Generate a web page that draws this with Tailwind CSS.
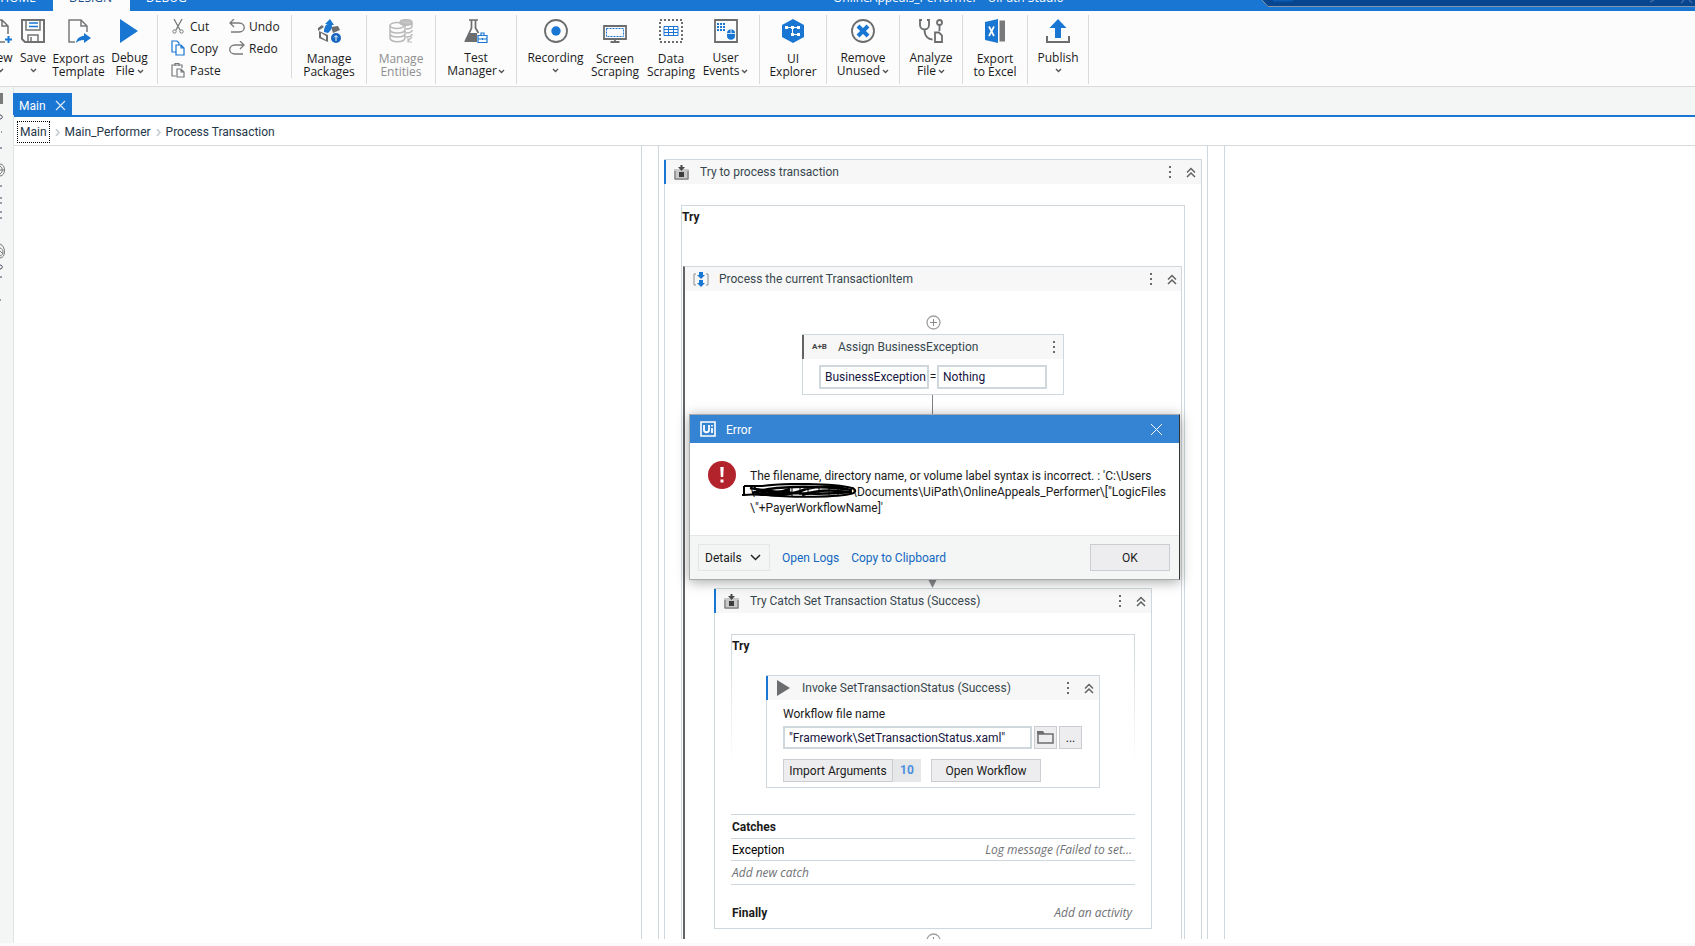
<!DOCTYPE html>
<html lang="en">
  <head>
    <meta charset="UTF-8" />
    <meta name="viewport" content="width=device-width, initial-scale=1.0" />
    <title>OnlineAppeals_Performer - UiPath Studio</title>
    <script src="https://cdn.jsdelivr.net/npm/@tailwindcss/browser@4"></script>
  </head>

  <body
    class="h-screen overflow-hidden flex flex-col bg-[#fafafa] font-['Open_Sans','Noto_Sans',sans-serif] text-[12px] leading-4 text-[#1b1b1b]"
  >
    <!-- shared icons -->
    <svg class="hidden">
      <symbol id="chev" viewBox="0 0 7 5">
        <path d="M1 1l2.5 2.5L6 1" fill="none" stroke="#555" stroke-width="1.4" />
      </symbol>
      <symbol id="dots" viewBox="0 0 4 14">
        <path d="M1 1h2v2H1zM1 6h2v2H1zM1 11h2v2H1z" fill="#6b6b6b" />
      </symbol>
      <symbol id="collapse" viewBox="0 0 10 11">
        <path d="M1 5.5l4-4 4 4M1 10l4-4 4 4" fill="none" stroke="#5f6163" stroke-width="1.5" />
      </symbol>
      <symbol id="trycatch" viewBox="0 0 15 15">
        <path d="M0 4h15v11H0z" fill="#c9c9c9" />
        <path d="M1 6v8h13V6" fill="none" stroke="#6b6b6b" />
        <path d="M5 7h5v5H5z" fill="#3d3d3d" />
        <path d="M6.5 0h2v2h2.5L7.5 6 4 2h2.500z" fill="#4a4a4a" />
      </symbol>
      <symbol id="plus" viewBox="0 0 15 15">
        <circle cx="7.5" cy="7.500" r="6.5" fill="#fff" stroke="#a0a0a0" stroke-width="1.300" />
        <path d="M7.500 4v7M4 7.500h7" stroke="#8a8a8a" />
      </symbol>
    </svg>

    <header class="relative h-[11px] shrink-0 overflow-hidden bg-[#1976d2] text-white">
      <nav class="flex h-[11px] items-end">
        <a href="#" class="w-[53px] h-[11px] relative"><span class="absolute right-[17px] bottom-[5px]">HOME</span></a>
        <a href="#" class="w-[77px] h-[11px] relative bg-[#fcfcfc] text-[#1b4f8a]"><span class="absolute left-4 bottom-[5px]">DESIGN</span></a>
        <a href="#" class="w-[77px] h-[11px] relative"><span class="absolute left-4 bottom-[5px]">DEBUG</span></a>
      </nav>
      <span class="absolute left-[833px] bottom-[5px] whitespace-nowrap">OnlineAppeals_Performer - UiPath Studio</span>
      <svg class="absolute right-0 top-0" width="434" height="8" viewBox="0 0 434 8">
        <path d="M1 0l6 7h427V0z" fill="#07458f" />
        <path d="M1 0l6 6.500h427" fill="none" stroke="#8795a8" />
        <path d="M12 0h20v1.500H12z" fill="#0b5cb0" />
        <path d="M389 2l4-2M420 3l3-3M428 0l3 3" stroke="#3d6aa5" stroke-width="1.500" />
      </svg>
    </header>

    <!-- ribbon -->
    <div class="flex h-[76px] shrink-0 border-b border-[#dadcdc] bg-[#fcfcfc] pt-1 leading-[13px] text-center whitespace-nowrap overflow-hidden">
      <div class="flex h-[69px] gap-[9px] pr-[10px] border-r border-[#d9dadb] -ml-3">
        <button class="flex flex-col items-center w-6 pt-1">
          <svg width="24" height="24" viewBox="0 0 24 24" fill="none" stroke="#6f7173" stroke-width="1.500">
            <path d="M17 23H3V1h11l6 6v8M14 1v6h6" />
            <path d="M20.500 17v7M17 20.500h7" stroke="#1976d2" stroke-width="2" />
          </svg>
          <span class="mt-2">New</span>
          <svg class="mt-1" width="7" height="5"><use href="#chev" /></svg>
        </button>
        <button class="flex flex-col items-center w-6 pt-1">
          <svg width="24" height="24" viewBox="0 0 24 24" fill="none" stroke="#6f7173" stroke-width="2">
            <path d="M1 1h22v22H4l-3-3z" />
            <path d="M5 1v10h14V1M7 23v-7h10v7M10 18v4" stroke-width="1.500" />
            <path d="M8 4h9M8 7.500h9" stroke="#1976d2" stroke-width="1.500" />
          </svg>
          <span class="mt-2">Save</span>
          <svg class="mt-1" width="7" height="5"><use href="#chev" /></svg>
        </button>
        <button class="flex flex-col items-center w-[49px] pt-1">
          <svg width="24" height="24" viewBox="0 0 24 24" fill="none">
            <path d="M8 23H2V1h12l6 6v6M14 1v6h6" stroke="#77797b" stroke-width="1.500" />
            <path d="M9 24c1-5 4-7 8-7v-3l7 5-7 5v-3c-4 0-6 1-8 3z" fill="#1976d2" />
          </svg>
          <span class="mt-[9px]">Export as<br />Template</span>
        </button>
        <button class="flex flex-col items-center w-[35px] pt-1">
          <svg width="24" height="24" viewBox="0 0 24 24"><path d="M2 0l18 12L2 24z" fill="#1976d2" /></svg>
          <span class="mt-2">Debug<br />File<svg class="inline ml-[2px]" width="7" height="5"><use href="#chev" /></svg></span>
        </button>
      </div>

      <div class="grid grid-cols-[58px_auto] auto-rows-[22px] h-[63px] w-[134px] pl-[13px] border-r border-[#d9dadb] text-left content-start">
        <button class="flex items-center gap-[5px]">
          <svg width="14" height="15" viewBox="0 0 14 15" fill="none" stroke="#77797b">
            <path d="M3 0l6 11M11 0L5 11" stroke-width="1.300" /><circle cx="3.500" cy="12.500" r="1.700" /><circle cx="10.500" cy="12.500" r="1.700" />
          </svg>
          Cut
        </button>
        <button class="flex items-center gap-1">
          <svg width="16" height="14" viewBox="0 0 16 14" fill="none" stroke="#77797b" stroke-width="1.300">
            <path d="M5 0L1 4l4 4M1 4h9c7 0 7 9 0 9H2" />
          </svg>
          Undo
        </button>
        <button class="flex items-center gap-[5px]">
          <svg width="14" height="16" viewBox="0 0 14 16" fill="#fff" stroke="#1976d2" stroke-width="1.200">
            <path d="M1 1h5l2 2v9H1z" /><path d="M5 5h5l3 3v7H5zM10 5v3h3" />
          </svg>
          Copy
        </button>
        <button class="flex items-center gap-1">
          <svg width="16" height="14" viewBox="0 0 16 14" fill="none" stroke="#77797b" stroke-width="1.300">
            <path d="M11 0l4 4-4 4M15 4H6c-7 0-7 9 0 9h8" />
          </svg>
          Redo
        </button>
        <button class="flex items-center gap-[5px]">
          <svg width="14" height="16" viewBox="0 0 14 16" fill="none" stroke="#77797b" stroke-width="1.200">
            <path d="M5 14H1V3h10v3M4 4V1.500h4V4" /><path d="M6 7h4l3 3v5H6zM10 7v3h3" />
          </svg>
          Paste
        </button>
      </div>

      <div class="h-[69px] w-[75px] flex justify-center border-r border-[#d9dadb]">
        <button class="flex flex-col items-center pt-1">
          <svg width="24" height="24" viewBox="0 0 24 24">
            <path d="M1 12l6-4-2-2-4 3zM2 12v7l9 4v-7zM14 8l7-1 2 4-7 3z" fill="#6b6d6f" />
            <path d="M4 14v4l5 3v-4z" fill="#fcfcfc" />
            <path d="M7 13c0-5 2-8 4-8H8l5-5 4 6h-2c0 3-1 6-4 8z" fill="#1976d2" />
            <circle cx="19" cy="19" r="5" fill="#1565c0" />
            <path d="M19 22v-5M17 18.500l2-2 2 2" fill="none" stroke="#fff" />
          </svg>
          <span class="mt-[9px]">Manage<br />Packages</span>
        </button>
      </div>

      <div class="h-[69px] w-[69px] flex justify-center border-r border-[#d9dadb]">
        <button disabled class="flex flex-col items-center pt-1 text-[#8f8f8f]">
          <svg width="24" height="24" viewBox="0 0 24 24" fill="none" stroke="#b9b9b9" stroke-width="1.500">
            <ellipse cx="17" cy="3.500" rx="6" ry="2.700" fill="#c4c4c4" />
            <ellipse cx="8" cy="6.500" rx="7" ry="3" />
            <path d="M1 7v12c1 5 14 5 15 0V7M1 11c1 4 14 4 15 0M1 15c1 4 14 4 15 0M17 10c3 0 6-1 6-3M17 14c3 0 6-1 6-3M17 18c3 0 6-1 6-3M23 4v3" />
            <path d="M23 18l-4 4M19 19v4h4" stroke-width="1.200" />
          </svg>
          <span class="mt-[9px]">Manage<br />Entities</span>
        </button>
      </div>

      <div class="h-[69px] w-[81px] flex justify-center border-r border-[#d9dadb]">
        <button class="flex flex-col items-center pt-1">
          <svg width="24" height="24" viewBox="0 0 24 24">
            <path d="M5 1h9M7.500 1v8L1.500 22h10M11.500 1v8l3 5" fill="none" stroke="#6b6d6f" stroke-width="1.700" />
            <path d="M5 14h8v9H1z" fill="#6b6d6f" />
            <path d="M14 16.500h9v7h-9zM14 20h9M17 16v-2h3v2M18.500 19v2" fill="#fcfcfc" stroke="#1976d2" stroke-width="1.200" />
          </svg>
          <span class="mt-2">Test<br />Manager<svg class="inline ml-px" width="7" height="5"><use href="#chev" /></svg></span>
        </button>
      </div>

      <div class="h-[69px] w-[243px] flex justify-between px-3 border-r border-[#d9dadb]">
        <button class="flex flex-col items-center w-[53px] pt-1">
          <svg width="24" height="24" viewBox="0 0 24 24">
            <circle cx="12" cy="12" r="11" fill="none" stroke="#6b6d6f" stroke-width="1.800" /><circle cx="12" cy="12" r="4.700" fill="#1976d2" />
          </svg>
          <span class="mt-2">Recording</span>
          <svg class="mt-1" width="7" height="5"><use href="#chev" /></svg>
        </button>
        <button class="flex flex-col items-center w-[46px] pt-1">
          <svg width="24" height="24" viewBox="0 0 24 24" fill="none">
            <path d="M1 7h22v13H1zM12 20v3M7.500 23h9" stroke="#6b6d6f" stroke-width="1.800" />
            <path d="M3.500 9.500h17v8h-17z" stroke="#1976d2" stroke-dasharray="2 1" />
          </svg>
          <span class="mt-[9px]">Screen<br />Scraping</span>
        </button>
        <button class="flex flex-col items-center w-[46px] pt-1">
          <svg width="24" height="24" viewBox="0 0 24 24" fill="none">
            <path d="M1 1h22v22H1z" stroke="#6b6d6f" stroke-width="2" stroke-dasharray="2 2" />
            <path d="M5 7.500h14v9H5zM5 10.500h14M5 13.500h14M9.500 7v10M14.500 7v10" stroke="#1976d2" />
          </svg>
          <span class="mt-[9px]">Data<br />Scraping</span>
        </button>
        <button class="flex flex-col items-center w-[43px] pt-1">
          <svg width="24" height="24" viewBox="0 0 24 24" fill="none">
            <path d="M1 1h22v22H1z" stroke="#6b6d6f" stroke-width="1.800" />
            <path d="M3 5h8M3 8h8M3 11h8" stroke="#1976d2" stroke-width="2" stroke-dasharray="2 1" />
            <path d="M13 14c0-5 8-5 8 0v3c0 5-8 5-8 0z" fill="#1976d2" /><path d="M13 14.500h8M17 10v4" stroke="#fff" stroke-width=".8" />
          </svg>
          <span class="mt-2">User<br />Events<svg class="inline ml-[2px]" width="7" height="5"><use href="#chev" /></svg></span>
        </button>
      </div>

      <div class="h-[69px] w-[67px] flex justify-center border-r border-[#d9dadb]">
        <button class="flex flex-col items-center pt-1">
          <svg width="24" height="24" viewBox="0 0 24 24">
            <path d="M12 0l11 6v12l-11 6-11-6V6z" fill="#1976d2" />
            <path d="M5 8.500h13M11.500 8.500v7H18" fill="none" stroke="#fff" />
            <path d="M4 7h3v3H4zM10 7h3v3h-3zM16 7h3v3h-3zM10 14h3v3h-3zM16 14h3v3h-3z" fill="#fff" />
          </svg>
          <span class="mt-[9px]">UI<br />Explorer</span>
        </button>
      </div>

      <div class="h-[69px] w-[73px] flex justify-center border-r border-[#d9dadb]">
        <button class="flex flex-col items-center pt-1">
          <svg width="24" height="24" viewBox="0 0 24 24" fill="none">
            <circle cx="12" cy="12" r="11" stroke="#6b6d6f" stroke-width="1.800" />
            <path d="M7 7l10 10M17 7L7 17" stroke="#1976d2" stroke-width="4" />
          </svg>
          <span class="mt-2">Remove<br />Unused<svg class="inline ml-[2px]" width="7" height="5"><use href="#chev" /></svg></span>
        </button>
      </div>

      <div class="h-[69px] w-[63px] flex justify-center border-r border-[#d9dadb]">
        <button class="flex flex-col items-center pt-1">
          <svg width="24" height="24" viewBox="0 0 24 24" fill="none" stroke="#6b6d6f" stroke-width="1.800">
            <path d="M3 1H1v5c0 6 9 6 9 0V1H8M5.500 10.500c0 7 4 10 8 10" />
            <circle cx="20.500" cy="3.500" r="2.500" /><path d="M20.500 6v6" /><path d="M16 13.500h4l3 3V23h-7z" />
          </svg>
          <span class="mt-2">Analyze<br />File<svg class="inline ml-[2px]" width="7" height="5"><use href="#chev" /></svg></span>
        </button>
      </div>

      <div class="h-[69px] w-[65px] flex justify-center border-r border-[#d9dadb]">
        <button class="flex flex-col items-center pt-1">
          <svg width="24" height="24" viewBox="0 0 24 24">
            <path d="M2 3l13-3v24L2 21z" fill="#1976d2" /><path d="M16.500 1.500H22v21h-5.500z" fill="#77797b" />
            <path d="M6 7.500l5 9.500M11 7.500L6 17" stroke="#fff" stroke-width="1.700" />
          </svg>
          <span class="mt-[9px]">Export<br />to Excel</span>
        </button>
      </div>

      <div class="h-[69px] w-[61px] flex justify-center border-r border-[#d9dadb]">
        <button class="flex flex-col items-center pt-1">
          <svg width="24" height="24" viewBox="0 0 24 24">
            <path d="M12 0l8.500 9H15v10H9V9H3.500z" fill="#1976d2" />
            <path d="M1 17v6h22v-6" fill="none" stroke="#6b6d6f" stroke-width="2" />
          </svg>
          <span class="mt-2">Publish</span>
          <svg class="mt-1" width="7" height="5"><use href="#chev" /></svg>
        </button>
      </div>
    </div>

    <div class="flex flex-1 min-h-0 font-[Roboto,sans-serif]">
      <!-- collapsed side panels -->
      <aside class="w-[13px] shrink-0 bg-[#f4f6f5]">
        <svg width="13" height="220" viewBox="0 0 13 220" fill="none">
          <path d="M0 6h3v11H0" fill="#7a7a7a" />
          <path d="M0 28c3 0 3 4 0 4M1 45h1M0 61h2M0 99h2M1 110v2M1 115v2M1 124v2M1 130v2M0 178c3 0 3 4 0 4M1 189v2M0 213h1" stroke="#41425f" />
          <path d="M0 77c6 0 6 12 0 12M0 83h5M0 79c3 2 3 6 0 8" stroke="#77797b" />
          <path d="M0 157c6 2 6 14 0 14M0 161c4 1 4 7 0 8M0 164l3 3" stroke="#77797b" />
        </svg>
      </aside>

      <main class="flex-1 flex flex-col min-w-0 border-l border-[#dfe3e3] bg-white">
        <div class="bg-[#f4f6f5] pt-[6px] border-b-2 border-[#1976d2] shrink-0">
          <div class="flex items-center w-[59px] h-[22px] -ml-px pl-[6px] pt-[3px] gap-[9px] bg-[#1976d2] text-white">
            <a href="#">Main</a>
            <button aria-label="Close tab">
              <svg width="11" height="11" viewBox="0 0 11 11"><path d="M1 1l9 9M10 1l-9 9" stroke="#dbe9f8" stroke-width="1.200" /></svg>
            </button>
          </div>
        </div>
        <nav class="flex items-center h-[29px] shrink-0 border-b border-[#d5dada] pt-[2px] pl-[3px] gap-[5px] text-[#24364a]">
          <a href="#" class="border border-dotted border-black px-[2px] h-[22px] leading-[21px]">Main</a>
          <svg width="5" height="7" viewBox="0 0 5 7"><path d="M1 0l3 3.500L1 7" fill="none" stroke="#c3cad0" stroke-width="1.500" /></svg>
          <a href="#">Main_Performer</a>
          <svg width="5" height="7" viewBox="0 0 5 7"><path d="M1 0l3 3.500L1 7" fill="none" stroke="#c3cad0" stroke-width="1.500" /></svg>
          <a href="#">Process Transaction</a>
        </nav>

        <!-- workflow canvas -->
        <div class="flex-1 min-h-0 overflow-hidden flex justify-center pl-[157px] mb-1">
          <div class="w-[584px] h-[900px] shrink-0 border-x border-[#cfd8dc] px-4">
            <div class="relative h-full border-x border-[#cfd8dc] pt-[13px] px-[5px]">
              <section class="h-full border border-[#cfd8dc]">
                <div class="flex items-center h-6 bg-[#f7f7f7] border-l-2 border-[#1976d2] -ml-px pl-2 pr-1 text-[#37474f]">
                  <svg width="15" height="15"><use href="#trycatch" /></svg>
                  <h2 class="ml-[11px] flex-1">Try to process transaction</h2>
                  <button aria-label="Options"><svg width="4" height="14"><use href="#dots" /></svg></button>
                  <button aria-label="Collapse" class="ml-[13px]"><svg width="12" height="11"><use href="#collapse" /></svg></button>
                </div>
                <div class="mt-[21px] mx-4 h-full border border-[#cfd8dc]">
                  <h3 class="font-bold mt-[3px] mb-[41px]">Try</h3>
                  <section class="h-full ml-px mr-[2px] border-t border-r border-l-2 border-[#cfd8dc] border-l-[#616365]">
                    <div class="flex items-center h-6 bg-[#f7f7f7] pl-2 pr-[3px] text-[#37474f]">
                      <svg width="16" height="15" viewBox="0 0 16 15">
                        <path d="M3 2H1v11h2M13 2h2v11h-2" fill="none" stroke="#8b8d8f" />
                        <path d="M6 0h4v3h2L8 7 4 3h2zM6 8h4v3h2l-4 4-4-4h2z" fill="#1976d2" />
                      </svg>
                      <h2 class="ml-[10px] flex-1">Process the current TransactionItem</h2>
                      <button aria-label="Options"><svg width="4" height="14"><use href="#dots" /></svg></button>
                      <button aria-label="Collapse" class="ml-[13px]"><svg width="12" height="11"><use href="#collapse" /></svg></button>
                    </div>

                    <div class="flex flex-col items-center pt-6">
                      <button aria-label="Add activity"><svg width="15" height="15"><use href="#plus" /></svg></button>

                      <section class="w-[262px] mt-1 border border-[#cfd8dc]">
                        <div class="flex items-center h-6 bg-[#f7f7f7] border-l-2 border-[#616365] -ml-px pl-2 pr-[7px] text-[#37474f]">
                          <b class="w-4 text-[8px] text-[#444] whitespace-nowrap">A+B</b>
                          <h2 class="ml-[10px] flex-1">Assign BusinessException</h2>
                          <button aria-label="Options"><svg width="4" height="14"><use href="#dots" /></svg></button>
                        </div>
                        <div class="flex items-center justify-between px-4 pt-[6px] pb-[5px]">
                          <input aria-label="To" value="BusinessException" class="w-[110px] h-6 border-2 border-[#cfd8dc] pl-1 text-[#16163f]" />
                          =
                          <input aria-label="Value" value="Nothing" class="w-[110px] h-6 border-2 border-[#cfd8dc] pl-1 text-[#16163f]" />
                        </div>
                      </section>

                      <svg width="10" height="193" viewBox="0 0 10 193">
                        <path d="M4.500 0v186" stroke="#808284" /><path d="M0 184h9l-4.500 9z" fill="#8b8d8f" />
                      </svg>

                      <section class="w-[438px] border border-[#cfd8dc]">
                        <div class="flex items-center h-6 bg-[#f7f7f7] border-l-2 border-[#1976d2] -ml-px pl-2 pr-1 text-[#37474f]">
                          <svg width="15" height="15"><use href="#trycatch" /></svg>
                          <h2 class="ml-[11px] flex-1">Try Catch Set Transaction Status (Success)</h2>
                          <button aria-label="Options"><svg width="4" height="14"><use href="#dots" /></svg></button>
                          <button aria-label="Collapse" class="ml-[13px]"><svg width="12" height="11"><use href="#collapse" /></svg></button>
                        </div>

                        <div class="mx-4 mt-[21px]">
                          <div class="relative border-t border-[#cfd8dc] px-[35px] pt-[3px] h-[180px]">
                            <div class="absolute left-0 top-0 w-px h-[132px] bg-linear-to-b from-[#cfd8dc] to-white"></div>
                            <div class="absolute right-0 top-0 w-px h-[132px] bg-linear-to-b from-[#cfd8dc] to-white"></div>
                            <h3 class="font-bold -ml-[34px] mb-[21px]">Try</h3>
                            <section class="border border-[#cfd8dc]">
                              <div class="flex items-center h-6 bg-[#f7f7f7] border-l-2 border-[#1976d2] -ml-px pl-[9px] pr-1 text-[#37474f]">
                                <svg width="13" height="16" viewBox="0 0 13 16"><path d="M0 0l13 8L0 16z" fill="#6b6d6f" /></svg>
                                <h2 class="ml-3 flex-1">Invoke SetTransactionStatus (Success)</h2>
                                <button aria-label="Options"><svg width="4" height="14"><use href="#dots" /></svg></button>
                                <button aria-label="Collapse" class="ml-[13px]"><svg width="12" height="11"><use href="#collapse" /></svg></button>
                              </div>
                              <div class="px-4 pt-[6px] pb-[5px]">
                                <label for="workflowFile" class="block mb-1">Workflow file name</label>
                                <div class="flex gap-[2px]">
                                  <input id="workflowFile" value='"Framework\SetTransactionStatus.xaml"' class="w-[249px] h-[23px] border-2 border-[#cfd8dc] pl-1 text-[#16163f]" />
                                  <button aria-label="Browse" class="w-[23px] h-[23px] flex items-center justify-center bg-[#ededef] border border-[#cccdd2]">
                                    <svg width="17" height="13" viewBox="0 0 17 13"><path d="M1 3h15v9H1z" fill="none" stroke="#6b6d6f" stroke-width="1.500" /><path d="M0 0h6l2 3H0z" fill="#6b6d6f" /></svg>
                                  </button>
                                  <button class="w-[23px] h-[23px] bg-[#ededef] border border-[#cccdd2]">...</button>
                                </div>
                                <div class="flex mt-[10px]">
                                  <button class="w-[110px] h-[23px] bg-[#ededef] border border-[#cccdd2] whitespace-nowrap">Import Arguments</button>
                                  <span class="w-7 h-[23px] leading-[23px] text-center bg-[#e6e7e8] font-bold text-[#4d8fe0]">10</span>
                                  <button class="w-[110px] h-[23px] ml-[10px] bg-[#ededef] border border-[#cccdd2]">Open Workflow</button>
                                </div>
                              </div>
                            </section>
                          </div>

                          <table class="w-full border-collapse">
                            <tr class="h-6 border-y border-[#cfd8dc] text-left"><th colspan="2" class="pl-px">Catches</th></tr>
                            <tr class="h-[22px] border-b border-[#cfd8dc]">
                              <td class="pl-px text-black">Exception</td>
                              <td class="text-right pr-[3px] font-['Open_Sans',sans-serif] italic text-[#707276]">Log message (Failed to set...</td>
                            </tr>
                            <tr class="h-6 border-b border-[#cfd8dc]"><td colspan="2" class="pl-px font-['Open_Sans',sans-serif] italic text-[#707276]">Add new catch</td></tr>
                          </table>
                          <div class="flex justify-between pt-5 pb-[7px] pl-px pr-[3px]">
                            <b>Finally</b>
                            <i class="font-['Open_Sans',sans-serif] text-[#707276]">Add an activity</i>
                          </div>
                        </div>
                      </section>

                      <button aria-label="Add activity" class="mt-1"><svg width="15" height="15"><use href="#plus" /></svg></button>
                    </div>
                  </section>
                </div>
              </section>

              <!-- error dialog -->
              <div role="dialog" aria-labelledby="dialogTitle" class="absolute left-[30px] right-[27px] top-[268px] border border-[#a6aaac] border-r-[#333] bg-white shadow-[0_2px_12px_rgba(0,0,0,0.35)]">
                <div class="flex items-center h-7 bg-[#3583d3] text-white pl-[10px] pr-[17px]">
                  <svg width="16" height="16" viewBox="0 0 16 16" fill="none" stroke="#fff">
                    <path d="M1 1h14v14H1z" stroke-width="1.600" /><path d="M4 4v5c0 3 5 3 5 0V4M12 7v5M12 4v1.500" stroke-width="1.800" />
                  </svg>
                  <h2 id="dialogTitle" class="ml-[10px] pt-px flex-1">Error</h2>
                  <button aria-label="Close"><svg width="11" height="11" viewBox="0 0 11 11"><path d="M0 0l11 11M11 0L0 11" stroke="#fff" /></svg></button>
                </div>
                <div class="flex h-[93px] pl-[18px] border-b border-[#e3e6e6]">
                  <svg class="mt-[18px] shrink-0" width="28" height="28" viewBox="0 0 28 28">
                    <circle cx="14" cy="14" r="14" fill="#b3232c" /><path d="M12.300 6h3.400l-.5 10h-2.400zM12.500 18.500h3v3h-3z" fill="#fff" />
                  </svg>
                  <p class="ml-[14px] mt-[25px] whitespace-nowrap">
                    The filename, directory name, or volume label syntax is incorrect. : 'C:\Users<br />
                    <span class="relative inline-block w-[102px] h-4 align-top">\<svg class="absolute -left-2 -top-px" width="116" height="16" viewBox="0 0 116 16" fill="none" stroke="#000">
                        <path d="M2 3v9H0M2 3h18c20-3 72-3 90 2 5 2 4 5-2 6-20 4-66 3-84 1-8 0-14-1-22 0" stroke-width="2" />
                        <path d="M8 5c20 4 60 8 102 4M10 10C30 3 70 2 110 7M12 5c10 8 34 9 52 1 14-4 32-3 44 1" stroke-width="2.500" />
                        <path d="M12 9c12 4 24 4 36-1M16 7c14 3 22 3 32-1M22 11c10 2 20 1 28-1M60 12c14-5 28-6 46-3" stroke-width="2.500" />
                        <path d="M50 4v9M58 3v9M66 3v9M77 3v9M87 3v9M96 4v8" stroke-width="1" />
                      </svg></span>\Documents\UiPath\OnlineAppeals_Performer\["LogicFiles<br />
                    \"+PayerWorkflowName]'
                  </p>
                </div>
                <div class="flex items-center h-[43px] bg-[#f4f6f5] pl-2 pr-[9px]">
                  <button class="flex items-center justify-between w-[72px] h-[27px] border border-[#e3e6e6] pl-[6px] pr-2">
                    Details
                    <svg width="11" height="7" viewBox="0 0 11 7"><path d="M1 1l4.500 4.500L10 1" fill="none" stroke="#222" stroke-width="1.500" /></svg>
                  </button>
                  <a href="#" class="ml-3 text-[#1267c0]">Open Logs</a>
                  <a href="#" class="ml-3 text-[#1267c0]">Copy to Clipboard</a>
                  <button class="ml-auto w-20 h-[27px] bg-[#ededef] border border-[#cccdd2]">OK</button>
                </div>
              </div>
            </div>
          </div>
        </div>
      </main>
    </div>
    <div class="h-[3px] shrink-0 bg-[#fafafa]"></div>
  </body>
</html>
